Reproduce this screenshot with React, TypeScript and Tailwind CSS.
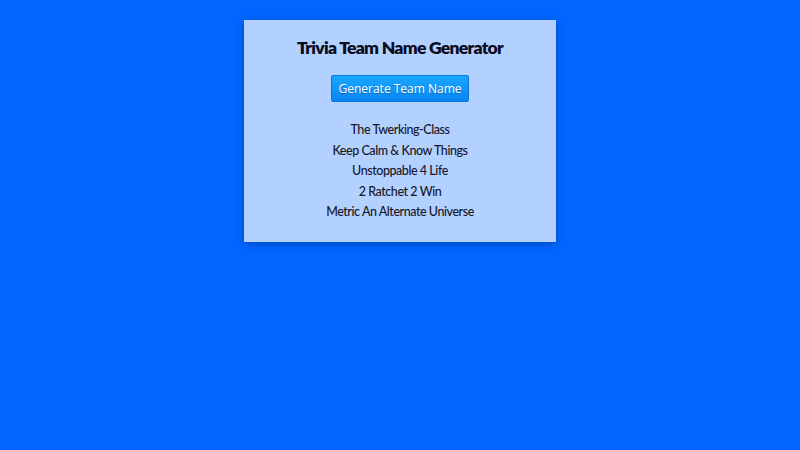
export default function App() {
  const names = [
    'The Twerking-Class',
    'Keep Calm & Know Things',
    'Unstoppable 4 Life',
    '2 Ratchet 2 Win',
    'Metric An Alternate Universe',
  ]

  return (
    <div className="min-h-screen w-full bg-[#0066ff] pt-[20px] font-['Lato',sans-serif]">
      <div className="mx-auto w-[312px] bg-[#b3d1ff] pt-[17px] pb-[21px] text-center shadow-[0_2px_8px_rgba(0,0,40,0.3)]">
        <h1 className="text-[17.5px] leading-[22px] font-extrabold tracking-[-0.7px] text-[#0b0b1e]">Trivia Team Name Generator</h1>
        <button
          type="button"
          className="mt-[16px] h-[27px] rounded-[2px] border border-[#0a78e0] bg-gradient-to-b from-[#1aa8ff] to-[#0a84f0] px-[6px] font-['Open_Sans',sans-serif] text-[12px] text-white [text-shadow:0_1px_1px_rgba(0,0,0,0.25)]"
        >
          Generate Team Name
        </button>
        <ul className="mt-[20px] flex flex-col gap-[4px] text-[12.5px] leading-[16.5px] font-medium tracking-[-0.45px] text-[#16162a]">
          {names.map((name) => (
            <li key={name}>{name}</li>
          ))}
        </ul>
      </div>
    </div>
  )
}
